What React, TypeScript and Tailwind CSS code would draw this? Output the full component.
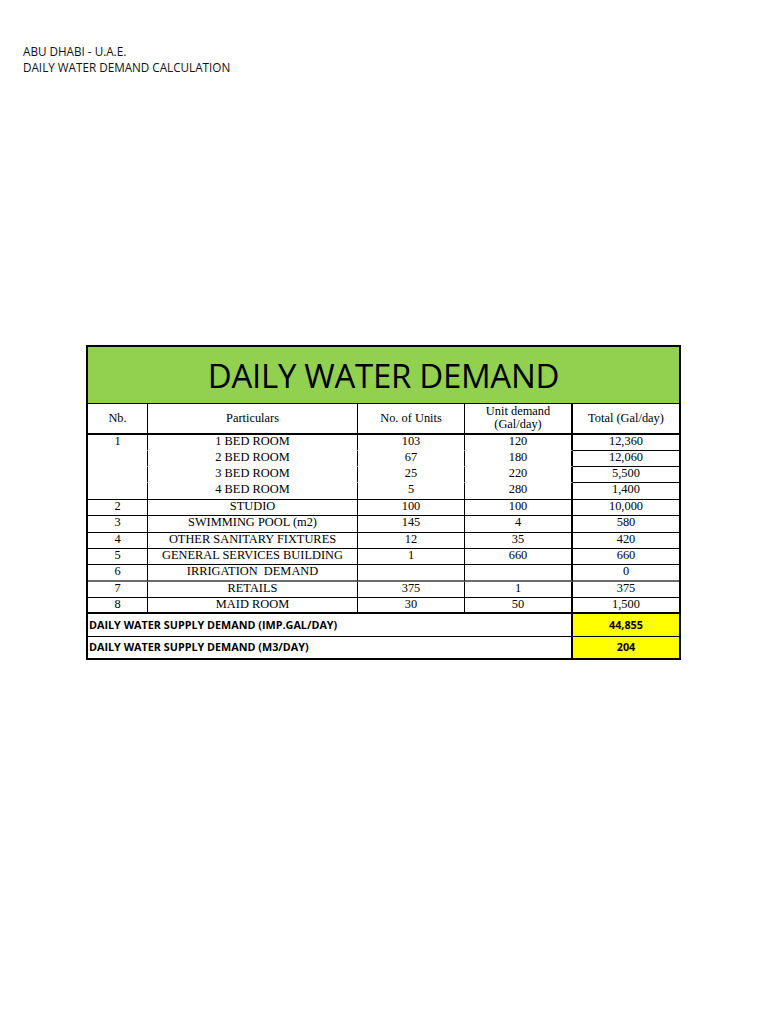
import React from "react";

type Row = {
  nb: string;
  part: string;
  units: string;
  demand: string;
  total: string;
  h: string;
  line: boolean; // bottom line across all columns
  thick?: boolean;
  gray?: boolean;
};

const rows: Row[] = [
  { nb: "1", part: "1 BED ROOM", units: "103", demand: "120", total: "12,360", h: "h-[16px]", line: false },
  { nb: "", part: "2 BED ROOM", units: "67", demand: "180", total: "12,060", h: "h-[16px]", line: false },
  { nb: "", part: "3 BED ROOM", units: "25", demand: "220", total: "5,500", h: "h-[16px]", line: false },
  { nb: "", part: "4 BED ROOM", units: "5", demand: "280", total: "1,400", h: "h-[17px]", line: true },
  { nb: "2", part: "STUDIO", units: "100", demand: "100", total: "10,000", h: "h-[16px]", line: true },
  { nb: "3", part: "SWIMMING POOL (m2)", units: "145", demand: "4", total: "580", h: "h-[17px]", line: true },
  { nb: "4", part: "OTHER SANITARY FIXTURES", units: "12", demand: "35", total: "420", h: "h-[16px]", line: true },
  { nb: "5", part: "GENERAL SERVICES BUILDING", units: "1", demand: "660", total: "660", h: "h-[16px]", line: true },
  { nb: "6", part: "IRRIGATION  DEMAND", units: "", demand: "", total: "0", h: "h-[17px]", line: true, gray: true },
  { nb: "7", part: "RETAILS", units: "375", demand: "1", total: "375", h: "h-[16px]", line: true },
  { nb: "8", part: "MAID ROOM", units: "30", demand: "50", total: "1,500", h: "h-[16px]", line: true, thick: true },
];

const serif = "font-['Liberation_Serif','Times_New_Roman',serif]";
const sans = "font-['Open_Sans','Noto_Sans',sans-serif]";

function DataRow({ r }: { r: Row }) {
  const lineCls = r.thick
    ? "border-b-2 border-black"
    : r.gray
    ? "border-b-2 border-[#6b6b6b]"
    : r.line
    ? "border-b border-black"
    : "border-b border-transparent";
  const totalLine = r.thick
    ? "border-b-2 border-black"
    : r.gray
    ? "border-b-2 border-[#6b6b6b]"
    : "border-b border-black";
  return (
    <div className={`flex ${r.h} text-[12.4px] leading-[12px] text-black ${serif}`}>
      <div className={`w-[60px] border-r border-r-black ${lineCls} flex justify-center`}>{r.nb}</div>
      <div className={`w-[210px] border-r border-r-black ${lineCls} flex justify-center whitespace-pre`}>{r.part}</div>
      <div className={`w-[107px] border-r border-r-black ${lineCls} flex justify-center`}>{r.units}</div>
      <div className={`w-[108px] border-r-2 border-r-black ${lineCls} flex justify-center`}>{r.demand}</div>
      <div className={`w-[106px] ${totalLine} flex justify-center`}>{r.total}</div>
    </div>
  );
}

export default function App() {
  return (
    <div className="w-[768px] h-[1024px] bg-white relative overflow-hidden">
      <div className={`pt-[43px] pl-[23px] text-[11.7px] leading-[16px] text-[#111] ${sans}`}>
        <div>ABU DHABI - U.A.E.</div>
        <div>DAILY WATER DEMAND CALCULATION</div>
      </div>

      <div className="ml-[86px] mt-[270px] w-[595px] border-2 border-black">
        {/* title */}
        <div className={`h-[57px] bg-[#92d050] border-b border-black flex items-center justify-center ${sans}`}>
          <span className="text-[33px] leading-none tracking-[-0.3px] text-black">DAILY WATER DEMAND</span>
        </div>
        {/* header row */}
        <div className={`flex h-[31px] border-b-2 border-black text-[12.4px] leading-[13px] text-black ${serif}`}>
          <div className="w-[60px] border-r border-black flex items-center justify-center">Nb.</div>
          <div className="w-[210px] border-r border-black flex items-center justify-center">Particulars</div>
          <div className="w-[107px] border-r border-black flex items-center justify-center">No. of Units</div>
          <div className="w-[108px] border-r-2 border-black flex flex-col items-center justify-center text-center pb-[1px]">
            <span>Unit demand</span>
            <span>(Gal/day)</span>
          </div>
          <div className="w-[106px] flex items-center justify-center">Total (Gal/day)</div>
        </div>
        {rows.map((r, i) => (
          <DataRow key={i} r={r} />
        ))}
        {/* summary rows */}
        <div className={`flex h-[23px] border-b border-black text-[10.8px] font-bold text-black ${sans}`}>
          <div className="w-[485px] border-r-2 border-black flex items-center pl-[1px]">
            DAILY WATER SUPPLY DEMAND (IMP.GAL/DAY)
          </div>
          <div className="w-[106px] bg-[#ffff00] flex items-center justify-center">44,855</div>
        </div>
        <div className={`flex h-[21px] text-[10.8px] font-bold text-black ${sans}`}>
          <div className="w-[485px] border-r-2 border-black flex items-center pl-[1px]">
            DAILY WATER SUPPLY DEMAND (M3/DAY)
          </div>
          <div className="w-[106px] bg-[#ffff00] flex items-center justify-center">204</div>
        </div>
      </div>
    </div>
  );
}
